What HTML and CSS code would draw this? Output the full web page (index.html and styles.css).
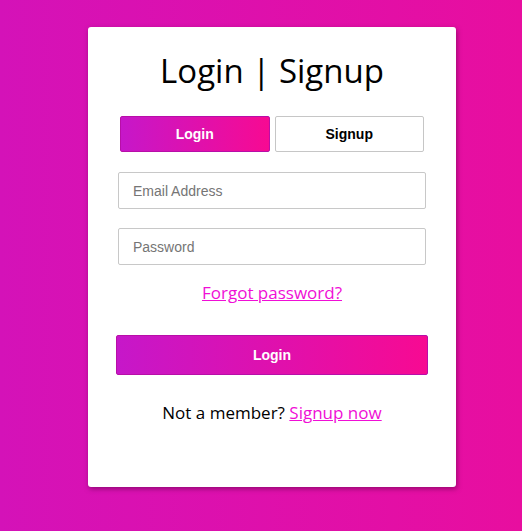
FILE: index.html
```
<!DOCTYPE html>
<html lang="en">
<head>
<meta charset="utf-8">
<title>Login | Signup</title>
<link rel="stylesheet" href="styles.css">
</head>
<body>
<div class="page">
  <div class="card">
    <h1 class="title">Login | Signup</h1>
    <div class="tabs">
      <button class="tab tab-active">Login</button>
      <button class="tab">Signup</button>
    </div>
    <input class="field" type="email" placeholder="Email Address">
    <input class="field field-second" type="password" placeholder="Password">
    <a class="forgot" href="#">Forgot password?</a>
    <button class="submit">Login</button>
    <p class="member">Not a member? <a class="link" href="#">Signup now</a></p>
  </div>
</div>
</body>
</html>
```
FILE: styles.css
```
html, body {
  margin: 0;
  padding: 0;
}
body {
  width: 522px;
  height: 531px;
  overflow: hidden;
  background: linear-gradient(to right, #d412b8, #e80e9f);
  font-family: "Open Sans", "DejaVu Sans", sans-serif;
}
.page {
  padding: 27px 0 0 88px;
}
.card {
  width: 368px;
  height: 460px;
  box-sizing: border-box;
  background: #fff;
  border-radius: 3px;
  box-shadow: 1px 2px 5px rgba(90, 0, 70, 0.55);
  padding: 20px 30px 0;
  display: flex;
  flex-direction: column;
  align-items: center;
}
.title {
  margin: 0;
  font-weight: 500;
  font-size: 33px;
  line-height: 47px;
  color: #000;
  letter-spacing: 0;
}
.tabs {
  display: flex;
  gap: 5px;
  margin-top: 22px;
  width: 304px;
}
.tab {
  flex: 1;
  height: 36px;
  border: 1px solid #c6c6c6;
  border-radius: 2px;
  background: #fff;
  font-family: "Liberation Sans", Arial, sans-serif;
  font-weight: 700;
  font-size: 14px;
  color: #000;
  padding: 0;
}
.tab-active {
  background: linear-gradient(to right, #c617c9, #f70a92);
  border-color: #b80ea8;
  color: #fff;
}
.field {
  width: 308px;
  height: 37px;
  box-sizing: border-box;
  border: 1px solid #c8c8c8;
  border-radius: 2px;
  padding: 0 14px;
  font-family: "Liberation Sans", Arial, sans-serif;
  font-size: 14px;
  color: #000;
  margin-top: 20px;
  outline: none;
}
.field-second {
  margin-top: 19px;
}
.field::placeholder {
  color: #757575;
}
.forgot, .link {
  color: #f00ed6;
  text-decoration: underline;
}
.forgot {
  margin-top: 16px;
  font-size: 17px;
  line-height: 24px;
}
.submit {
  width: 312px;
  height: 40px;
  margin-top: 30px;
  border: 1px solid #b80ea8;
  border-radius: 2px;
  background: linear-gradient(to right, #c617c9, #f70a92);
  color: #fff;
  font-family: "Liberation Sans", Arial, sans-serif;
  font-weight: 700;
  font-size: 14px;
  padding: 0;
}
.member {
  margin: 26px 0 0;
  font-size: 17px;
  line-height: 24px;
  color: #000;
}
```
